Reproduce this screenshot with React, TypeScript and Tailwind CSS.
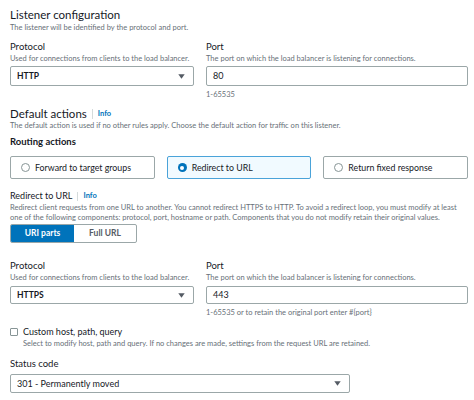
import React from "react";

const Caret = () => (
  <svg width="7" height="5" viewBox="0 0 7 5" className="shrink-0">
    <path d="M0.3 0.3 L6.7 0.3 L3.5 4.7 Z" fill="#545b64" />
  </svg>
);

const Radio = ({ checked }: { checked?: boolean }) =>
  checked ? (
    <span className="w-[9px] h-[9px] rounded-full bg-[#0073bb] flex items-center justify-center shrink-0">
      <span className="w-[4px] h-[4px] rounded-full bg-white" />
    </span>
  ) : (
    <span className="w-[9px] h-[9px] rounded-full border border-[#879596] bg-white shrink-0" />
  );

export default function App() {
  const dark = "text-[#16191f]";
  const sub = "text-[7.5px] leading-[10px] text-[#687078]";
  return (
    <div
      className={`w-[474px] h-[400px] bg-white px-[10px] pt-[7px] overflow-hidden ${dark}`}
      style={{ fontFamily: 'Lato, sans-serif' }}
    >
      <div className="text-[11.5px] leading-[16px]">Listener configuration</div>
      <div className={sub}>The listener will be identified by the protocol and port.</div>

      <div className="grid grid-cols-[184px_262px] gap-x-[12px] mt-[8px]">
        <div>
          <div className="text-[9.5px] leading-[12px]">Protocol</div>
          <div className={`${sub} mt-[1px] whitespace-nowrap`}>Used for connections from clients to the load balancer.</div>
          <div className="mt-[2px] h-[20px] border border-[#9ba7a8] rounded-[2px] flex items-center justify-between pl-[6px] pr-[8px]">
            <span className="text-[8.5px] font-bold">HTTP</span>
            <Caret />
          </div>
        </div>
        <div>
          <div className="text-[9.5px] leading-[12px]">Port</div>
          <div className={`${sub} mt-[1px]`}>The port on which the load balancer is listening for connections.</div>
          <div className="mt-[2px] h-[20px] border border-[#9ba7a8] rounded-[2px] flex items-center pl-[6px]">
            <span className="text-[9px]">80</span>
          </div>
          <div className={`${sub} mt-[4px]`}>1-65535</div>
        </div>
      </div>

      <div className="mt-[7px] flex items-center">
        <span className="text-[11.5px] leading-[14px]">Default actions</span>
        <span className="w-px h-[10px] bg-[#d5dbdb] ml-[5px] mr-[5px]" />
        <span className="text-[7.5px] font-bold text-[#0073bb]">Info</span>
      </div>
      <div className={sub}>
        The default action is used if no other rules apply. Choose the default action for traffic on this listener.
      </div>
      <div className="mt-[5px] text-[9.5px] leading-[12px] font-bold">Routing actions</div>

      <div className="mt-[8px] grid grid-cols-3 gap-x-[12px] w-[458px]">
        <div className="h-[23px] border border-[#9ba7a8] rounded-[2px] flex items-center gap-[5px] pl-[10px]">
          <Radio />
          <span className="text-[8.8px]">Forward to target groups</span>
        </div>
        <div className="h-[23px] border border-[#4aa3d9] bg-[#f1faff] rounded-[2px] flex items-center gap-[5px] pl-[10px]">
          <Radio checked />
          <span className="text-[8.8px]">Redirect to URL</span>
        </div>
        <div className="h-[23px] border border-[#9ba7a8] rounded-[2px] flex items-center gap-[5px] pl-[10px]">
          <Radio />
          <span className="text-[8.8px]">Return fixed response</span>
        </div>
      </div>

      <div className="mt-[11px] flex items-center h-[12px]">
        <span className="text-[9px]">Redirect to URL</span>
        <span className="w-px h-[9px] bg-[#d5dbdb] ml-[5px] mr-[5px]" />
        <span className="text-[7.5px] font-bold text-[#0073bb]">Info</span>
      </div>
      <div className={`${sub} mt-[1px] w-[455px]`}>
        Redirect client requests from one URL to another. You cannot redirect HTTPS to HTTP. To avoid a redirect loop, you must modify at least one of the following components: protocol, port, hostname or path. Components that you do not modify retain their original values.
      </div>

      <div className="mt-[1px] flex w-[127px] h-[19px] border border-[#9ba7a8] rounded-[2px] overflow-hidden">
        <div className="w-[63px] bg-[#0073bb] text-white text-[8.5px] font-bold flex items-center justify-center">URI parts</div>
        <div className="flex-1 text-[#545b64] text-[8.5px] font-bold flex items-center justify-center">Full URL</div>
      </div>

      <div className="grid grid-cols-[184px_262px] gap-x-[12px] mt-[17px]">
        <div>
          <div className="text-[9.5px] leading-[12px]">Protocol</div>
          <div className={`${sub} mt-[1px] whitespace-nowrap`}>Used for connections from clients to the load balancer.</div>
          <div className="mt-[3px] h-[18px] border border-[#9ba7a8] rounded-[2px] flex items-center justify-between pl-[6px] pr-[8px]">
            <span className="text-[8.5px] font-bold">HTTPS</span>
            <Caret />
          </div>
        </div>
        <div>
          <div className="text-[9.5px] leading-[12px]">Port</div>
          <div className={`${sub} mt-[1px]`}>The port on which the load balancer is listening for connections.</div>
          <div className="mt-[3px] h-[18px] border border-[#9ba7a8] rounded-[2px] flex items-center pl-[6px]">
            <span className="text-[9px]">443</span>
          </div>
          <div className={`${sub} mt-[4px]`}>1-65535 or to retain the original port enter #{"{port}"}</div>
        </div>
      </div>

      <div className="mt-[8px] flex items-center gap-[5px] h-[12px]">
        <span className="w-[8px] h-[8px] border border-[#879596] rounded-[1px] bg-white" />
        <span className="text-[9px]">Custom host, path, query</span>
      </div>
      <div className={`${sub} mt-[1px] pl-[13px]`}>
        Select to modify host, path and query. If no changes are made, settings from the request URL are retained.
      </div>

      <div className="mt-[9px] text-[9.5px] leading-[12px]">Status code</div>
      <div className="mt-[4px] w-[340px] h-[19px] border border-[#9ba7a8] rounded-[2px] flex items-center justify-between pl-[6px] pr-[8px]">
        <span className="text-[9px]">301 - Permanently moved</span>
        <Caret />
      </div>
    </div>
  );
}
